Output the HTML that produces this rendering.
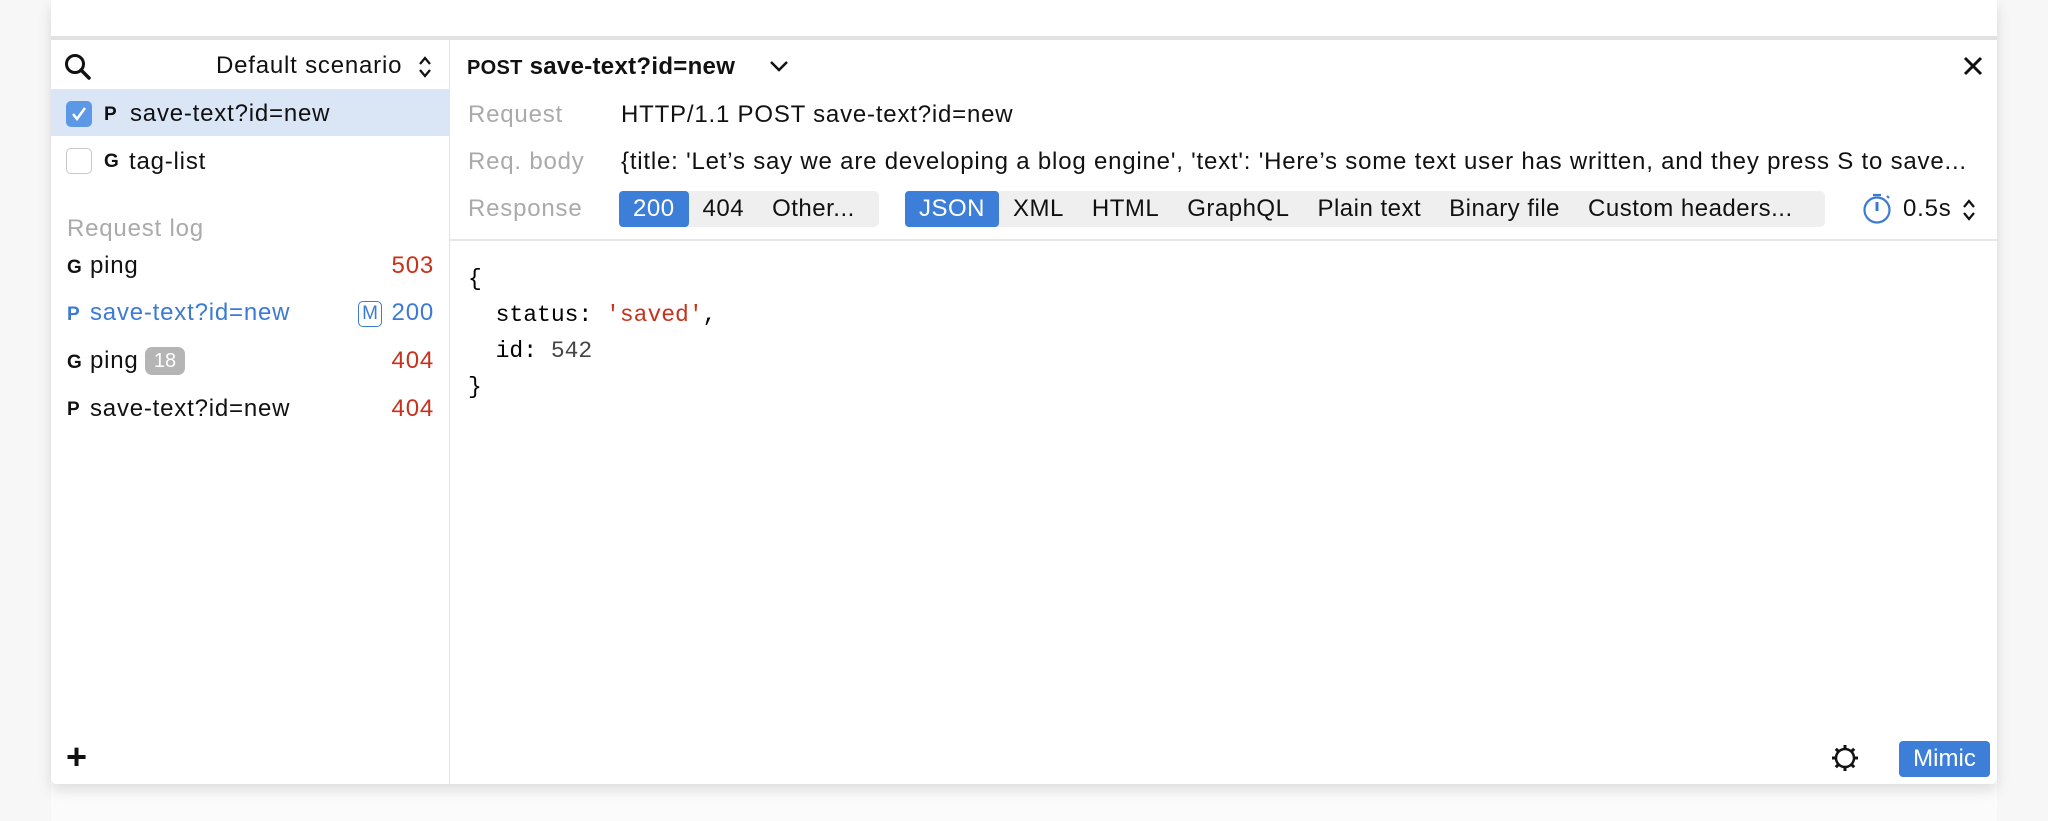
<!DOCTYPE html>
<html><head><meta charset="utf-8"><style>
*{margin:0;padding:0;box-sizing:border-box}
body{width:2048px;height:821px;background:#fff;font-family:"Liberation Sans",Arial,sans-serif;font-size:24px;letter-spacing:0.8px;color:#111;position:relative;overflow:hidden}
.a{position:absolute;white-space:nowrap}
.m{font-weight:bold;font-size:19px;letter-spacing:0}
.red{color:#c8321c}.blue{color:#3b7bd6}.gray{color:#aaa}
.seg{position:absolute;top:191px;height:36px;background:#efefef;border-radius:5px;display:flex;white-space:nowrap;letter-spacing:0.5px}
.seg span{height:36px;line-height:36px;padding:0 14px;white-space:nowrap;flex:none}
.seg .on{background:#3d7fd8;color:#fff;border-radius:4px}
.code{font-family:"Liberation Mono",monospace;font-size:23px;letter-spacing:0;color:#000}
</style></head><body>
<div class="a" style="left:0;top:0;width:51px;height:821px;background:#f7f7f7"></div>
<div class="a" style="left:1997px;top:0;width:51px;height:821px;background:#f7f7f7"></div>
<div class="a" style="left:51px;top:784px;width:1946px;height:37px;background:#fbfbfb"></div>
<div class="a" style="left:51px;top:0;width:1946px;height:784px;background:#fff;box-shadow:0 6px 14px rgba(0,0,0,0.12);border-radius:0 0 6px 6px"></div>
<div class="a" style="left:51px;top:36px;width:1946px;height:4px;background:#e2e2e2"></div>
<div class="a" style="left:449px;top:40px;width:1px;height:744px;background:#e4e4e4"></div>
<!-- sidebar -->
<svg class="a" style="left:64px;top:53px" width="28" height="28" viewBox="0 0 28 28"><circle cx="11" cy="11" r="8.5" fill="none" stroke="#111" stroke-width="3"/><path d="M17 17l8 8" stroke="#111" stroke-width="3.5" stroke-linecap="round"/></svg>
<div class="a" style="left:216px;top:52px">Default scenario</div>
<svg class="a" style="left:418px;top:55px" width="14" height="24" viewBox="0 0 14 24"><path d="M2 9l5-6 5 6M2 15l5 6 5-6" fill="none" stroke="#111" stroke-width="2.2"/></svg>
<div class="a" style="left:51px;top:89px;width:398px;height:47px;background:#dae5f5"></div>
<div class="a" style="left:66px;top:101px;width:26px;height:26px;background:#5d98e6;border-radius:5px"></div>
<svg class="a" style="left:66px;top:101px" width="26" height="26"><path d="M7 13l4 5 8-11" fill="none" stroke="#fff" stroke-width="2.5"/></svg>
<div class="a m" style="left:104px;top:104px">P</div>
<div class="a" style="left:130px;top:100px">save-text?id=new</div>
<div class="a" style="left:66px;top:148px;width:26px;height:26px;border:1.5px solid #c8c8c8;border-radius:5px;background:#fff"></div>
<div class="a m" style="left:104px;top:151px">G</div>
<div class="a" style="left:129px;top:148px">tag-list</div>
<div class="a gray" style="left:67px;top:215px">Request log</div>
<div class="a m" style="left:67px;top:257px">G</div><div class="a" style="left:90px;top:252px">ping</div><div class="a red" style="right:1614px;top:252px">503</div>
<div class="a m blue" style="left:67px;top:304px">P</div><div class="a blue" style="left:90px;top:299px">save-text?id=new</div>
<div class="a blue" style="left:358px;top:301px;width:24px;height:26px;border:1.5px solid #3b7bd6;border-radius:5px;font-size:19px;letter-spacing:0;line-height:23px;text-align:center">M</div>
<div class="a blue" style="right:1614px;top:299px">200</div>
<div class="a m" style="left:67px;top:352px">G</div><div class="a" style="left:90px;top:347px">ping</div>
<div class="a" style="left:145px;top:347px;width:40px;height:28px;background:#b5b5b5;color:#fff;border-radius:7px;font-size:20px;letter-spacing:0;line-height:28px;text-align:center">18</div>
<div class="a red" style="right:1614px;top:347px">404</div>
<div class="a m" style="left:67px;top:399px">P</div><div class="a" style="left:90px;top:395px">save-text?id=new</div><div class="a red" style="right:1614px;top:395px">404</div>
<div class="a" style="left:66px;top:740px;font-size:36px;line-height:34px;font-weight:bold">+</div>
<!-- main -->
<div class="a" style="left:467px;top:53px;font-weight:bold;letter-spacing:0.3px"><span style="font-size:20px">POST</span> save-text?id=new</div>
<svg class="a" style="left:768px;top:58px" width="22" height="16"><path d="M3 4l8 8 8-8" fill="none" stroke="#111" stroke-width="2.5"/></svg>
<svg class="a" style="left:1962px;top:55px" width="22" height="22"><path d="M3 3l16 16M19 3L3 19" stroke="#111" stroke-width="3"/></svg>
<div class="a gray" style="left:468px;top:101px">Request</div>
<div class="a" style="left:621px;top:101px">HTTP/1.1 POST save-text?id=new</div>
<div class="a gray" style="left:468px;top:148px">Req. body</div>
<div class="a" style="left:621px;top:148px;width:1370px;overflow:hidden">{title: 'Let’s say we are developing a blog engine', 'text': 'Here’s some text user has written, and they press S to save...</div>
<div class="a gray" style="left:468px;top:195px">Response</div>
<div class="seg" style="left:619px;width:260px"><span class="on">200</span><span>404</span><span>Other...</span></div>
<div class="seg" style="left:905px;width:920px"><span class="on">JSON</span><span>XML</span><span>HTML</span><span>GraphQL</span><span>Plain text</span><span>Binary file</span><span>Custom headers...</span></div>
<svg class="a" style="left:1862px;top:190px" width="32" height="36" viewBox="0 0 32 36"><circle cx="15" cy="20" r="12.5" fill="none" stroke="#3b7bd6" stroke-width="2.2"/><path d="M15 12v9" stroke="#3b7bd6" stroke-width="3"/><path d="M11 5h8M25 6l2 2" stroke="#3b7bd6" stroke-width="2.2"/></svg>
<div class="a" style="left:1903px;top:195px">0.5s</div>
<svg class="a" style="left:1962px;top:198px" width="14" height="24" viewBox="0 0 14 24"><path d="M2 9l5-6 5 6M2 15l5 6 5-6" fill="none" stroke="#111" stroke-width="2.2"/></svg>
<div class="a" style="left:450px;top:239px;width:1547px;height:2px;background:#e6e6e6"></div>
<div class="a code" style="left:468px;top:261px;line-height:36px;white-space:pre">{
  status: <span class="red">'saved'</span>,
  id: <span style="color:#444">542</span>
}</div>
<svg class="a" style="left:1830px;top:743px" width="30" height="30" viewBox="0 0 30 30"><circle cx="15" cy="15" r="9" fill="none" stroke="#111" stroke-width="2.5"/><g stroke="#111" stroke-width="3"><path d="M15 2v4M15 24v4M2 15h4M24 15h4M5.8 5.8l2.8 2.8M21.4 21.4l2.8 2.8M5.8 24.2l2.8-2.8M21.4 8.6l2.8-2.8"/></g></svg>
<div class="a" style="left:1899px;top:741px;width:91px;height:36px;background:#3d7fd8;color:#fff;border-radius:4px;text-align:center;line-height:36px;letter-spacing:0">Mimic</div>
</body></html>
